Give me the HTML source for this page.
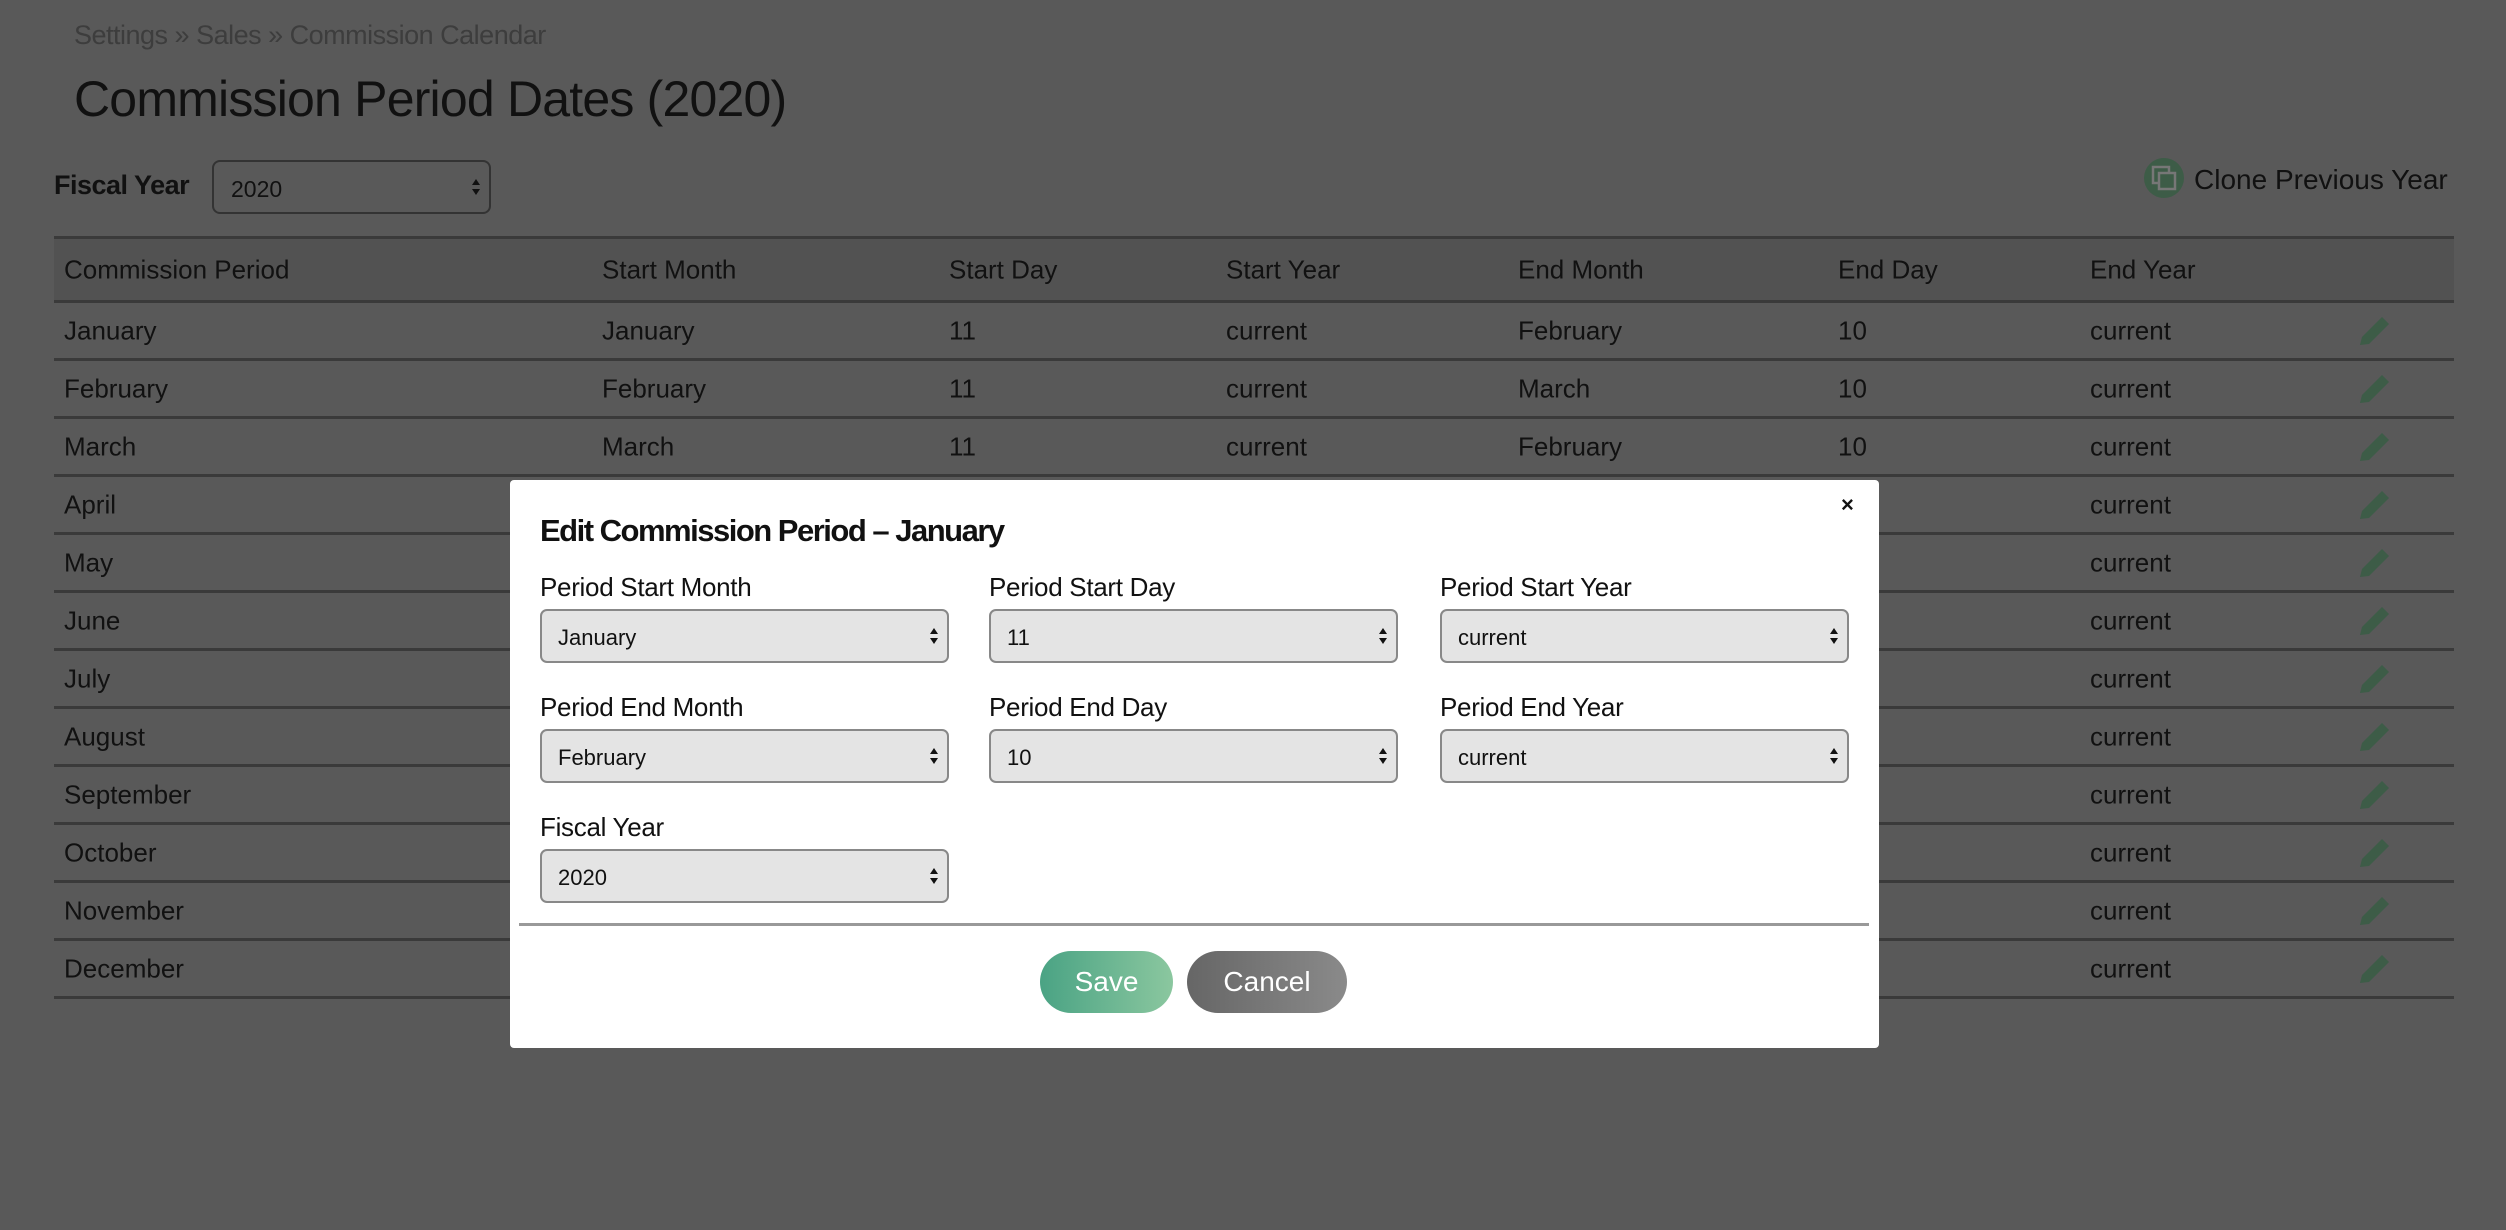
<!DOCTYPE html>
<html><head><meta charset="utf-8"><style>
*{margin:0;padding:0;box-sizing:border-box}
body{width:2506px;height:1230px;background:#595959;font-family:"Liberation Sans",sans-serif;color:#111;position:relative;overflow:hidden}
.a{position:absolute;white-space:nowrap}
.crumb{left:74px;top:20px;font-size:27px;color:#3d3d3d;letter-spacing:-0.5px}
.title{left:74px;top:70px;font-size:50px;color:#111;letter-spacing:-0.8px}
.fy{left:54px;top:170px;font-size:27px;font-weight:bold;letter-spacing:-0.5px}
.sel0{left:212px;top:160px;width:279px;height:54px;border:2px solid #333;border-radius:8px;font-size:23px;padding:14px 0 0 17px}
.arr{position:absolute;right:8px;top:50%;transform:translateY(-50%);width:10px;height:20px}
.clone{left:2194px;top:164px;font-size:28px}
.table{position:absolute;left:54px;top:236px;width:2400px}
.hdr{height:67px;background:#525252;border-top:3px solid #3a3a3a;border-bottom:3px solid #3a3a3a;position:relative}
.row{height:58px;border-bottom:3px solid #3a3a3a;position:relative}
.c{position:absolute;font-size:26px;top:50%;transform:translateY(-50%)}
.pen{position:absolute;left:2300px;top:50%;transform:translateY(-50%)}
.modal{position:absolute;left:510px;top:480px;width:1369px;height:568px;background:#fff;border-radius:4px}
.mt{left:30px;top:33px;font-size:31px;font-weight:bold;letter-spacing:-1.5px}
.x{left:1331px;top:12px;font-size:22px;font-weight:bold}
.lb{font-size:26px;letter-spacing:-0.3px}
.s{position:absolute;width:409px;height:54px;background:#e4e4e4;border:2px solid #888;border-radius:7px;font-size:22px;padding:14px 0 0 16px}
.div{position:absolute;left:9px;top:443px;width:1350px;height:3px;background:#999}
.btn{position:absolute;top:471px;height:62px;border-radius:31px;color:#fff;font-size:28px;text-align:center;line-height:62px}
</style></head><body>
<div class="a crumb">Settings » Sales » Commission Calendar</div>
<div class="a title">Commission Period Dates (2020)</div>
<div class="a fy">Fiscal Year</div>
<div class="a sel0">2020<svg class="arr" viewBox="0 0 10 20"><path d="M5 2L9 8H1Z M5 18L9 12H1Z" fill="#111"/></svg></div>
<svg class="a" style="left:2144px;top:158px" width="40" height="40" viewBox="0 0 40 40"><circle cx="20" cy="20" r="20" fill="#3d5c47"/><rect x="9" y="9" width="16" height="16" fill="none" stroke="#777" stroke-width="2.5"/><rect x="15" y="15" width="16" height="16" fill="#3d5c47" stroke="#777" stroke-width="2.5"/></svg>
<div class="a clone">Clone Previous Year</div>
<div class="table">
<div class="hdr"><div class="c" style="left:10px">Commission Period</div><div class="c" style="left:548px">Start Month</div><div class="c" style="left:895px">Start Day</div><div class="c" style="left:1172px">Start Year</div><div class="c" style="left:1464px">End Month</div><div class="c" style="left:1784px">End Day</div><div class="c" style="left:2036px">End Year</div></div>
<div id="rows"></div>
</div>
<script>
var m=["January","February","March","April","May","June","July","August","September","October","November","December"];
var e=["February","March","February","May","June","July","August","September","October","November","December","January"];
var h="";
for(var i=0;i<12;i++){h+='<div class="row"><div class="c" style="left:10px">'+m[i]+'</div><div class="c" style="left:548px">'+m[i]+'</div><div class="c" style="left:895px">11</div><div class="c" style="left:1172px">current</div><div class="c" style="left:1464px">'+e[i]+'</div><div class="c" style="left:1784px">10</div><div class="c" style="left:2036px">current</div><svg class="pen" width="40" height="40" viewBox="0 0 40 40"><path d="M6 34L8 26L28 6L35 13L15 33Z" fill="#3d5c47"/></svg></div>';}
document.getElementById("rows").innerHTML=h;
</script>
<div class="modal">
<div class="a mt">Edit Commission Period – January</div>
<div class="a x">×</div>
<div class="a lb" style="left:30px;top:92px">Period Start Month</div>
<div class="a lb" style="left:479px;top:92px">Period Start Day</div>
<div class="a lb" style="left:930px;top:92px">Period Start Year</div>
<div class="s" style="left:30px;top:129px">January<svg class="arr" viewBox="0 0 10 20"><path d="M5 2L9 8H1Z M5 18L9 12H1Z" fill="#111"/></svg></div>
<div class="s" style="left:479px;top:129px">11<svg class="arr" viewBox="0 0 10 20"><path d="M5 2L9 8H1Z M5 18L9 12H1Z" fill="#111"/></svg></div>
<div class="s" style="left:930px;top:129px">current<svg class="arr" viewBox="0 0 10 20"><path d="M5 2L9 8H1Z M5 18L9 12H1Z" fill="#111"/></svg></div>
<div class="a lb" style="left:30px;top:212px">Period End Month</div>
<div class="a lb" style="left:479px;top:212px">Period End Day</div>
<div class="a lb" style="left:930px;top:212px">Period End Year</div>
<div class="s" style="left:30px;top:249px">February<svg class="arr" viewBox="0 0 10 20"><path d="M5 2L9 8H1Z M5 18L9 12H1Z" fill="#111"/></svg></div>
<div class="s" style="left:479px;top:249px">10<svg class="arr" viewBox="0 0 10 20"><path d="M5 2L9 8H1Z M5 18L9 12H1Z" fill="#111"/></svg></div>
<div class="s" style="left:930px;top:249px">current<svg class="arr" viewBox="0 0 10 20"><path d="M5 2L9 8H1Z M5 18L9 12H1Z" fill="#111"/></svg></div>
<div class="a lb" style="left:30px;top:332px">Fiscal Year</div>
<div class="s" style="left:30px;top:369px">2020<svg class="arr" viewBox="0 0 10 20"><path d="M5 2L9 8H1Z M5 18L9 12H1Z" fill="#111"/></svg></div>
<div class="div"></div>
<div class="btn" style="left:530px;width:133px;background:linear-gradient(90deg,#4aa384,#8bc79f)">Save</div>
<div class="btn" style="left:677px;width:160px;background:linear-gradient(90deg,#666,#8a8a8a)">Cancel</div>
</div>
</body></html>
